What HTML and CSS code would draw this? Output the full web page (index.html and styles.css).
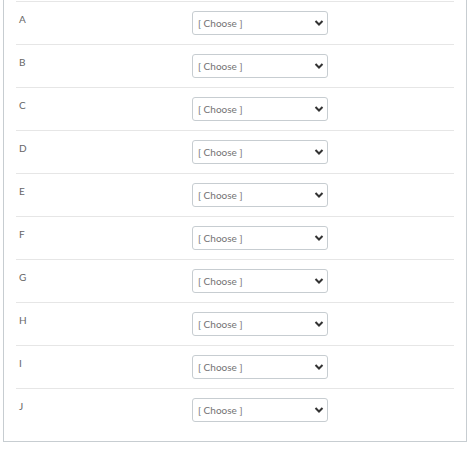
FILE: index.html
```html
<!DOCTYPE html>
<html>
<head>
<meta charset="utf-8">
<link rel="stylesheet" href="styles.css">
</head>
<body>
<div class="panel">
  <div class="list">
    <div class="row"><span class="label">A</span><span class="sel"><select><option>[ Choose ]</option></select><svg class="chev" width="10" height="8" viewBox="0 0 10 8"><path d="M1.5 2 L5 5.5 L8.5 2" fill="none" stroke="#333" stroke-width="2"/></svg></span></div>
    <div class="row"><span class="label">B</span><span class="sel"><select><option>[ Choose ]</option></select><svg class="chev" width="10" height="8" viewBox="0 0 10 8"><path d="M1.5 2 L5 5.5 L8.5 2" fill="none" stroke="#333" stroke-width="2"/></svg></span></div>
    <div class="row"><span class="label">C</span><span class="sel"><select><option>[ Choose ]</option></select><svg class="chev" width="10" height="8" viewBox="0 0 10 8"><path d="M1.5 2 L5 5.5 L8.5 2" fill="none" stroke="#333" stroke-width="2"/></svg></span></div>
    <div class="row"><span class="label">D</span><span class="sel"><select><option>[ Choose ]</option></select><svg class="chev" width="10" height="8" viewBox="0 0 10 8"><path d="M1.5 2 L5 5.5 L8.5 2" fill="none" stroke="#333" stroke-width="2"/></svg></span></div>
    <div class="row"><span class="label">E</span><span class="sel"><select><option>[ Choose ]</option></select><svg class="chev" width="10" height="8" viewBox="0 0 10 8"><path d="M1.5 2 L5 5.5 L8.5 2" fill="none" stroke="#333" stroke-width="2"/></svg></span></div>
    <div class="row"><span class="label">F</span><span class="sel"><select><option>[ Choose ]</option></select><svg class="chev" width="10" height="8" viewBox="0 0 10 8"><path d="M1.5 2 L5 5.5 L8.5 2" fill="none" stroke="#333" stroke-width="2"/></svg></span></div>
    <div class="row"><span class="label">G</span><span class="sel"><select><option>[ Choose ]</option></select><svg class="chev" width="10" height="8" viewBox="0 0 10 8"><path d="M1.5 2 L5 5.5 L8.5 2" fill="none" stroke="#333" stroke-width="2"/></svg></span></div>
    <div class="row"><span class="label">H</span><span class="sel"><select><option>[ Choose ]</option></select><svg class="chev" width="10" height="8" viewBox="0 0 10 8"><path d="M1.5 2 L5 5.5 L8.5 2" fill="none" stroke="#333" stroke-width="2"/></svg></span></div>
    <div class="row"><span class="label">I</span><span class="sel"><select><option>[ Choose ]</option></select><svg class="chev" width="10" height="8" viewBox="0 0 10 8"><path d="M1.5 2 L5 5.5 L8.5 2" fill="none" stroke="#333" stroke-width="2"/></svg></span></div>
    <div class="row"><span class="label">J</span><span class="sel"><select><option>[ Choose ]</option></select><svg class="chev" width="10" height="8" viewBox="0 0 10 8"><path d="M1.5 2 L5 5.5 L8.5 2" fill="none" stroke="#333" stroke-width="2"/></svg></span></div>
  </div>
</div>
</body>
</html>
```
FILE: styles.css
```css
html, body {
  margin: 0;
  padding: 0;
  background: #fff;
}
body {
  font-family: Lato, "Liberation Sans", sans-serif;
  color: #555;
}
.panel {
  box-sizing: border-box;
  margin-left: 3px;
  width: 464px;
  border: 1px solid #c7cdd1;
  border-top: 0;
  padding: 1px 12px 10px 12px;
}
.row {
  display: flex;
  align-items: flex-start;
  height: 42px;
  border-top: 1px solid #e6e6e6;
}
.label {
  box-sizing: border-box;
  width: 176px;
  padding-left: 3px;
  margin-top: 10px;
  font-size: 10px;
  line-height: 14px;
  color: #666;
}
.sel {
  display: block;
  position: relative;
  margin-top: 9px;
  width: 136px;
  height: 24px;
}
.sel select {
  display: block;
  appearance: none;
  -webkit-appearance: none;
  box-sizing: border-box;
  width: 136px;
  height: 24px;
  margin: 0;
  padding: 0 0 0 5px;
  border: 1px solid #c7cdd1;
  border-radius: 3px;
  background: #fff;
  font-family: Lato, "Liberation Sans", sans-serif;
  font-size: 10px;
  color: #737373;
}
.chev {
  position: absolute;
  right: 4px;
  top: 8px;
  pointer-events: none;
}
```
